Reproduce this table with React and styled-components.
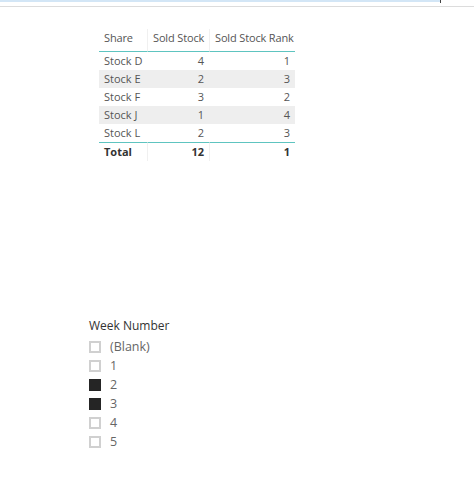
import React from "react";
import styled, { createGlobalStyle } from "styled-components";

const Global = createGlobalStyle`
  html, body { margin: 0; padding: 0; background: #ffffff; }
  body { font-family: "Open Sans", "Noto Sans", sans-serif; }
`;

const Page = styled.div`
  width: 474px;
  height: 477px;
  position: relative;
  overflow: hidden;
  background: #fff;
`;

const TopStrip = styled.div`
  display: flex;
  height: 3px;
`;

const BlueBar = styled.div`
  width: 440px;
  height: 2px;
  background: #d3e6f6;
`;

const Caret = styled.div`
  width: 1px;
  height: 3px;
  background: #444;
`;

const Rule = styled.div`
  margin-top: 3px;
  height: 1px;
  background: #dcdcdc;
`;

const TableWrap = styled.div`
  margin: 22px 0 0 99px;
  width: 196px;
`;

const Grid = styled.div`
  display: grid;
  grid-template-columns: 48px 62px 86px;
  font-size: 11px;
  color: #555;
`;

const HeadCell = styled.div`
  height: 22px;
  line-height: 18px;
  padding: 0 4px 0 5px;
  text-align: ${(p) => (p.$right ? "right" : "left")};
  border-bottom: 1px solid #5ec4c0;
  border-left: ${(p) => (p.$first ? "none" : "1px solid #f0f0f0")};
  white-space: nowrap;
  letter-spacing: -0.15px;
  color: #555;
`;

const Cell = styled.div`
  height: 18px;
  line-height: 18px;
  padding: 0 5px;
  text-align: ${(p) => (p.$right ? "right" : "left")};
  background: ${(p) => (p.$alt ? "#eeeeee" : "#ffffff")};
  white-space: nowrap;
`;

const TotalCell = styled.div`
  height: 18px;
  line-height: 18px;
  padding: 0 5px;
  text-align: ${(p) => (p.$right ? "right" : "left")};
  border-top: 1px solid #5ec4c0;
  border-left: ${(p) => (p.$first ? "none" : "1px solid #f0f0f0")};
  font-weight: 700;
  color: #333;
  white-space: nowrap;
`;

const Slicer = styled.div`
  margin: 157px 0 0 89px;
  display: flex;
  flex-direction: column;
`;

const SlicerTitle = styled.div`
  font-size: 12px;
  color: #333;
  height: 16px;
  line-height: 16px;
  margin-bottom: 3px;
`;

const Item = styled.div`
  display: flex;
  align-items: center;
  height: 19px;
  gap: 9px;
`;

const Box = styled.span`
  width: 12px;
  height: 12px;
  box-sizing: border-box;
  border: ${(p) => (p.$checked ? "none" : "2px solid #d0d0d0")};
  background: ${(p) => (p.$checked ? "#252525" : "#fff")};
`;

const Label = styled.span`
  font-size: 12.5px;
  color: #666;
  line-height: 19px;
`;

const rows = [
  ["Stock D", 4, 1],
  ["Stock E", 2, 3],
  ["Stock F", 3, 2],
  ["Stock J", 1, 4],
  ["Stock L", 2, 3],
];

const items = [
  ["(Blank)", false],
  ["1", false],
  ["2", true],
  ["3", true],
  ["4", false],
  ["5", false],
];

export default function App() {
  return (
    <Page>
      <Global />
      <TopStrip>
        <BlueBar />
        <Caret />
      </TopStrip>
      <Rule />
      <TableWrap>
        <Grid>
          <HeadCell $first>Share</HeadCell>
          <HeadCell>Sold Stock</HeadCell>
          <HeadCell>Sold Stock Rank</HeadCell>
          {rows.map((r, i) => (
            <React.Fragment key={r[0]}>
              <Cell $alt={i % 2 === 1}>{r[0]}</Cell>
              <Cell $alt={i % 2 === 1} $right>{r[1]}</Cell>
              <Cell $alt={i % 2 === 1} $right>{r[2]}</Cell>
            </React.Fragment>
          ))}
          <TotalCell $first>Total</TotalCell>
          <TotalCell $right>12</TotalCell>
          <TotalCell $right>1</TotalCell>
        </Grid>
      </TableWrap>
      <Slicer>
        <SlicerTitle>Week Number</SlicerTitle>
        {items.map(([l, c]) => (
          <Item key={l}>
            <Box $checked={c} />
            <Label>{l}</Label>
          </Item>
        ))}
      </Slicer>
    </Page>
  );
}
